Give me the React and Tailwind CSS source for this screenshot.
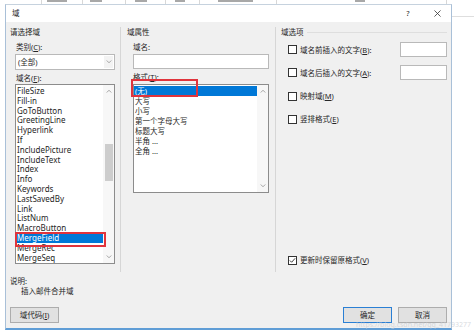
import React from "react";

const fieldNames = [
  "FileSize", "Fill-in", "GoToButton", "GreetingLine", "Hyperlink", "If",
  "IncludePicture", "IncludeText", "Index", "Info", "Keywords", "LastSavedBy",
  "Link", "ListNum", "MacroButton", "MergeField", "MergeRec", "MergeSeq",
];
const formats = ["(无)", "大写", "小写", "第一个字母大写", "标题大写", "半角 ...", "全角 ..."];

// table cells of the document behind the dialog: width, mark offset, mark width
const docCells = [
  [42, 0, 0], [41, 5, 20], [43, 7, 12], [40, 9, 12], [34, 9, 10], [77, 18, 35], [170, 78, 10],
];

const Chevron = ({ up, className }) => (
  <svg viewBox="0 0 8 5" className={className} fill="none" stroke="#8a8a8a" strokeWidth="1">
    <path d={up ? "M1 4.5 L4 1.5 L7 4.5" : "M1 0.5 L4 3.5 L7 0.5"} />
  </svg>
);

const Checkbox = ({ checked }) => (
  <span className="w-[9px] h-[9px] border border-[#333] bg-white flex items-center justify-center shrink-0">
    {checked && (
      <svg viewBox="0 0 8 8" className="w-[7px] h-[7px]" fill="none" stroke="#222" strokeWidth="1">
        <path d="M1 4 L3 6 L7 1.5" />
      </svg>
    )}
  </span>
);

const CheckRow = ({ label, checked, className = "" }) => (
  <div className={"flex items-center h-[10px] ml-[12px] " + className}>
    <Checkbox checked={checked} />
    <span className="ml-[3px] text-[7.5px] leading-[10px]">{label}</span>
  </div>
);

export default function App() {
  return (
    <div className="w-[474px] h-[331px] bg-white relative overflow-hidden flex flex-col text-[#262626] font-['Noto_Sans','Noto_Sans_CJK_SC',sans-serif]">
      {/* document behind the dialog, only its bottom edge shows */}
      <div className="h-[4px] flex">
        {docCells.map(([w, off, mw], i) => (
          <div key={i} style={{ width: w }} className="border-r border-[#d8d8d8] flex">
            {mw > 0 && <span style={{ marginLeft: off, width: mw }} className="h-[2px] bg-[#a8a8a8]" />}
          </div>
        ))}
      </div>

      <div className="flex flex-1">
        <div className="w-[5px]" />

        {/* dialog */}
        <div className="w-[447px] h-[326px] flex flex-col border-x border-[#a9c0d8] border-t border-t-[#c6d2de] border-b-2 border-b-[#5f9dd6]">
          <div className="h-[17px] bg-white flex items-center text-[7.5px]">
            <span className="ml-[6px]">域</span>
            <span className="ml-auto w-[10px] text-center mr-[16px]">?</span>
            <span className="w-[16px] flex justify-center mr-[6px]">
              <svg viewBox="0 0 8 8" className="w-[7px] h-[7px]" fill="none" stroke="#333" strokeWidth="0.9">
                <path d="M0.5 0.5 L7.5 7.5 M7.5 0.5 L0.5 7.5" />
              </svg>
            </span>
          </div>

          <div className="flex-1 bg-[#f0f0f0] flex flex-col">
            <div className="h-[250px] pt-[5px] flex">
              {/* 请选择域 */}
              <div className="w-[114px] flex flex-col text-[7.5px] leading-[10px]">
                <div className="ml-[4px] h-[10px]">请选择域</div>
                <div className="ml-[10px] mt-[5px] h-[10px]">类别(<u>C</u>):</div>
                <div className="ml-[9px] mt-[2px] w-[100px] h-[16px] bg-white border border-[#b9b9b9] flex items-center">
                  <span className="ml-[2px]">(全部)</span>
                  <span className="ml-auto mr-[1px] w-[9px] h-[12px] bg-[#f3f3f3] flex items-center justify-center">
                    <Chevron className="w-[6px] h-[4px]" />
                  </span>
                </div>
                <div className="ml-[10px] mt-[3px] h-[10px]">域名(<u>F</u>):</div>
                <div className="relative ml-[9px] mt-[1px] w-[100px] h-[180px] bg-white border border-[#8c8c8c] flex">
                  <div className="flex-1 pt-[1px] text-[8px]">
                    {fieldNames.map((n) => (
                      <div
                        key={n}
                        className={
                          "h-[9.8px] leading-[9.8px] pl-[1px] whitespace-nowrap " +
                          (n === "MergeField" ? "bg-[#0078d7] text-white" : "")
                        }
                      >
                        {n}
                      </div>
                    ))}
                  </div>
                  <div className="w-[11px] bg-[#f7f7f7] flex flex-col items-center">
                    <Chevron up className="w-[6px] h-[4px] mt-[4px]" />
                    <div className="w-[8px] h-[37px] bg-[#cdcdcd] mt-[51px]" />
                    <Chevron className="w-[6px] h-[4px] mt-auto mb-[4px]" />
                  </div>
                  <div className="absolute left-[-1px] top-[147px] w-[91px] h-[15px] border-2 border-[#e0343c]" />
                </div>
              </div>

              {/* 域属性 */}
              <div className="relative w-[155px] border-l border-[#d6d6d6] flex flex-col text-[7.5px] leading-[10px]">
                <div className="ml-[6px] h-[10px]">域属性</div>
                <div className="ml-[12px] mt-[5px] h-[10px]">域名:</div>
                <div className="ml-[12px] mt-[2px] w-[136px] h-[15px] bg-white border border-[#b9b9b9]" />
                <div className="ml-[12px] mt-[3px] h-[10px]">格式(<u>T</u>):</div>
                <div className="ml-[12px] mt-[2px] w-[136px] h-[109px] bg-white border border-[#8c8c8c] flex">
                  <div className="flex-1 pt-[1px]">
                    {formats.map((f, i) => (
                      <div
                        key={f}
                        className={"h-[10px] leading-[10px] pl-[1px] " + (i === 0 ? "bg-[#0078d7] text-white" : "")}
                      >
                        {f}
                      </div>
                    ))}
                  </div>
                  <div className="w-[11px] bg-[#f7f7f7] flex flex-col items-center">
                    <Chevron up className="w-[6px] h-[4px] mt-[4px]" />
                    <Chevron className="w-[6px] h-[4px] mt-auto mb-[4px]" />
                  </div>
                </div>
                <div className="absolute left-[10px] top-[52px] w-[67px] h-[18px] border-2 border-[#e0343c]" />
              </div>

              {/* 域选项 */}
              <div className="flex-1 border-l border-[#d6d6d6] flex flex-col text-[7.5px] leading-[10px] pb-[7px]">
                <div className="ml-[5px] h-[10px] flex items-center">
                  <span>域选项</span>
                  <span className="flex-1 h-px bg-[#dedede] ml-[3px] mr-[4px]" />
                </div>
                <div className="mt-[5px] h-[15px] flex items-center">
                  <CheckRow label={<>域名前插入的文字(<u>B</u>):</>} />
                  <div className="ml-auto mr-[4px] w-[47px] h-[15px] bg-white border border-[#b9b9b9]" />
                </div>
                <div className="mt-[8px] h-[15px] flex items-center">
                  <CheckRow label={<>域名后插入的文字(<u>A</u>):</>} />
                  <div className="ml-auto mr-[4px] w-[47px] h-[15px] bg-white border border-[#b9b9b9]" />
                </div>
                <CheckRow className="mt-[11px]" label={<>映射域(<u>M</u>)</>} />
                <CheckRow className="mt-[13px]" label={<>竖排格式(<u>E</u>)</>} />
                <CheckRow className="mt-auto" checked label={<>更新时保留原格式(<u>V</u>)</>} />
              </div>
            </div>

            <div className="flex-1 flex flex-col text-[7.5px] leading-[10px]">
              <div className="ml-[4px] mt-[4px]">说明:</div>
              <div className="ml-[15px]">插入邮件合并域</div>
              <div className="mt-[11px] flex">
                <div className="ml-[4px] w-[49px] h-[16px] bg-[#e1e1e1] border border-[#adadad] flex items-center justify-center">
                  域代码(<u>I</u>)
                </div>
                <div className="ml-auto w-[49px] h-[16px] bg-[#e1e1e1] border border-[#2a7fd4] flex items-center justify-center">
                  确定
                </div>
                <div className="ml-[6px] mr-[4px] w-[49px] h-[16px] bg-[#e1e1e1] border border-[#adadad] flex items-center justify-center">
                  取消
                </div>
              </div>
            </div>
          </div>
        </div>

        {/* document to the right of the dialog */}
        <div className="flex-1">
          <div className="h-[13px] border-b border-[#dedede]" />
        </div>
      </div>

      <div className="absolute left-[356px] top-[320px] text-[7px] leading-[9px] text-[#c8ccd2]/70 whitespace-nowrap">
        https://blog.csdn.net/qq_41793277
      </div>
    </div>
  );
}
